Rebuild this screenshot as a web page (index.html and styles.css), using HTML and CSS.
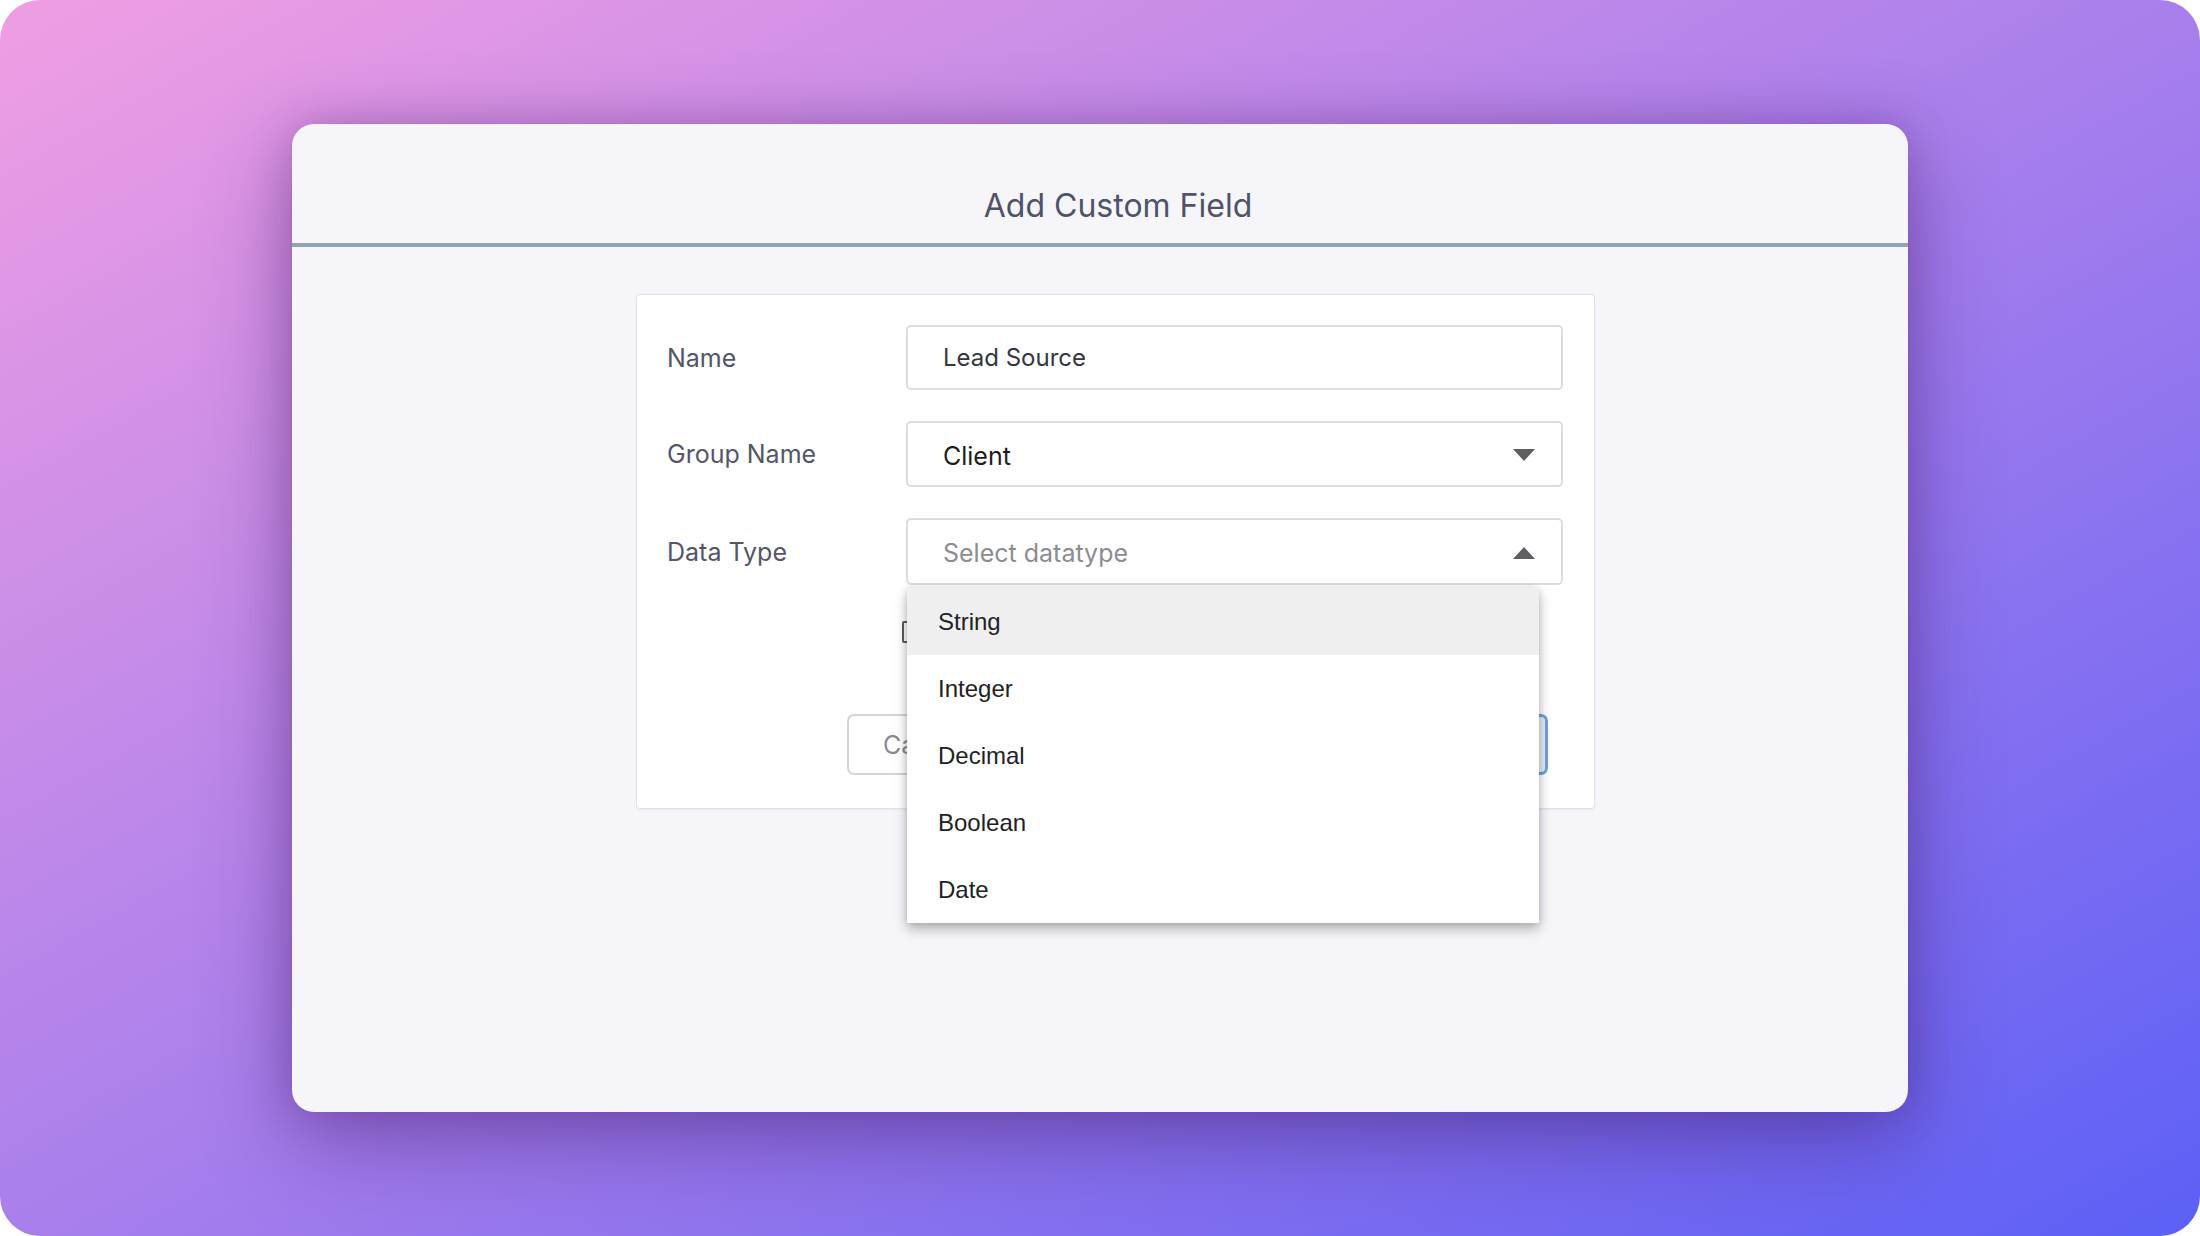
FILE: index.html
```html
<!DOCTYPE html>
<html lang="en">
<head>
<meta charset="utf-8">
<title>Add Custom Field</title>
<link rel="stylesheet" href="styles.css">
</head>
<body>
<div class="frame">
  <div class="modal">
    <div class="modal-header">
      <h1 class="modal-title">Add Custom Field</h1>
    </div>
    <div class="modal-body">
      <div class="card">
        <div class="form-row">
          <label class="form-label">Name</label>
          <div class="field">
            <span class="field-value">Lead Source</span>
          </div>
        </div>
        <div class="form-row">
          <label class="form-label">Group Name</label>
          <div class="field select group">
            <span class="field-value strong">Client</span>
            <span class="caret caret-down"></span>
          </div>
        </div>
        <div class="form-row">
          <label class="form-label">Data Type</label>
          <div class="field select open">
            <span class="field-value placeholder">Select datatype</span>
            <span class="caret caret-up"></span>
            <ul class="dropdown">
              <li class="dropdown-item active">String</li>
              <li class="dropdown-item">Integer</li>
              <li class="dropdown-item">Decimal</li>
              <li class="dropdown-item">Boolean</li>
              <li class="dropdown-item">Date</li>
            </ul>
          </div>
        </div>
        <div class="check-row">
          <span class="checkbox"></span>
        </div>
        <div class="button-row">
          <button class="btn btn-cancel">Cancel</button>
          <button class="btn btn-save"></button>
        </div>
      </div>
    </div>
  </div>
</div>
</body>
</html>
```

FILE: styles.css
```css
* { box-sizing: border-box; }

html, body {
  margin: 0;
  padding: 0;
  background: #ffffff;
}

body {
  width: 2200px;
  height: 1236px;
  overflow: hidden;
  font-family: Inter, "Open Sans", "Liberation Sans", sans-serif;
}

.frame {
  width: 2200px;
  height: 1236px;
  border-radius: 40px;
  background: linear-gradient(to bottom right, #f09ee3 0%, #a97fec 50%, #5c60f6 100%);
  display: flex;
  align-items: center;
  justify-content: center;
}

.modal {
  width: 1616px;
  height: 988px;
  background: #f6f6fa;
  border-radius: 22px;
  box-shadow: 0 30px 90px rgba(70, 30, 110, 0.45), 0 0 40px rgba(70, 30, 110, 0.25);
  display: flex;
  flex-direction: column;
}

.modal-header {
  height: 123px;
  border-bottom: 4px solid #8fa3b2;
  display: flex;
  align-items: flex-end;
  justify-content: center;
  padding-bottom: 19px;
  padding-left: 36px;
}

.modal-title {
  margin: 0;
  font-size: 32px;
  line-height: 36px;
  font-weight: 400;
  color: #4f5368;
}

.modal-body {
  padding: 47px 313px 0 344px;
}

.card {
  background: #ffffff;
  border: 1px solid #e2e3e9;
  border-radius: 4px;
  box-shadow: 0 1px 3px rgba(0, 0, 0, 0.05);
  padding: 30px 31px 33px 30px;
  display: flex;
  flex-direction: column;
}

.form-row {
  display: flex;
  align-items: center;
  margin-bottom: 31px;
}

.form-row:nth-child(3) {
  margin-bottom: 0;
}

.form-label {
  width: 239px;
  flex: none;
  font-size: 25px;
  color: #525668;
}

.field {
  position: relative;
  flex: 1;
  height: 65px;
  background: #ffffff;
  border: 2px solid #dcdcdf;
  border-radius: 5px;
  display: flex;
  align-items: center;
  padding: 0 26px 0 35px;
}

.field.group {
  height: 66px;
}

.field.open {
  height: 67px;
}

.field-value {
  flex: 1;
  font-size: 24px;
  color: #35363f;
}

.field-value.strong {
  font-size: 25px;
  color: #1c1c22;
  padding-top: 3px;
}

.field-value.placeholder {
  font-size: 25px;
  color: #8c8c92;
  padding-top: 3px;
}

.caret {
  width: 0;
  height: 0;
  border-left: 11px solid transparent;
  border-right: 11px solid transparent;
}

.caret-down {
  border-top: 12px solid #5f5f63;
  margin-top: 2px;
}

.caret-up {
  border-bottom: 12px solid #5f5f63;
  margin-top: 2px;
}

.dropdown {
  position: absolute;
  top: calc(100% + 5px);
  left: -1px;
  width: 632px;
  margin: 0;
  padding: 0;
  list-style: none;
  background: #ffffff;
  box-shadow: 0 6px 12px rgba(0, 0, 0, 0.28), 0 0 6px rgba(0, 0, 0, 0.12);
  z-index: 10;
}

.dropdown-item {
  height: 67px;
  display: flex;
  align-items: center;
  padding-left: 31px;
  font-family: "Liberation Sans", Arial, sans-serif;
  font-size: 24px;
  color: #222226;
}

.dropdown-item.active {
  background: #efeff0;
}

.check-row {
  display: flex;
  align-items: center;
  margin: 36px 0 0 235px;
  height: 22px;
}

.checkbox {
  width: 22px;
  height: 22px;
  border: 2px solid #5e5e62;
  border-radius: 2px;
}

.button-row {
  display: flex;
  gap: 20px;
  margin-top: 71px;
  padding-left: 180px;
  padding-right: 15px;
}

.btn {
  height: 61px;
  border-radius: 7px;
  font-family: Inter, "Liberation Sans", sans-serif;
  font-size: 25px;
  text-align: left;
  padding: 0 0 0 34px;
}

.btn-cancel {
  width: 190px;
  background: #ffffff;
  border: 2px solid #d4d4d8;
  color: #8a8a90;
}

.btn-save {
  flex: 1;
  background: #e4eefa;
  border: 3px solid #6fa3d6;
}
```
